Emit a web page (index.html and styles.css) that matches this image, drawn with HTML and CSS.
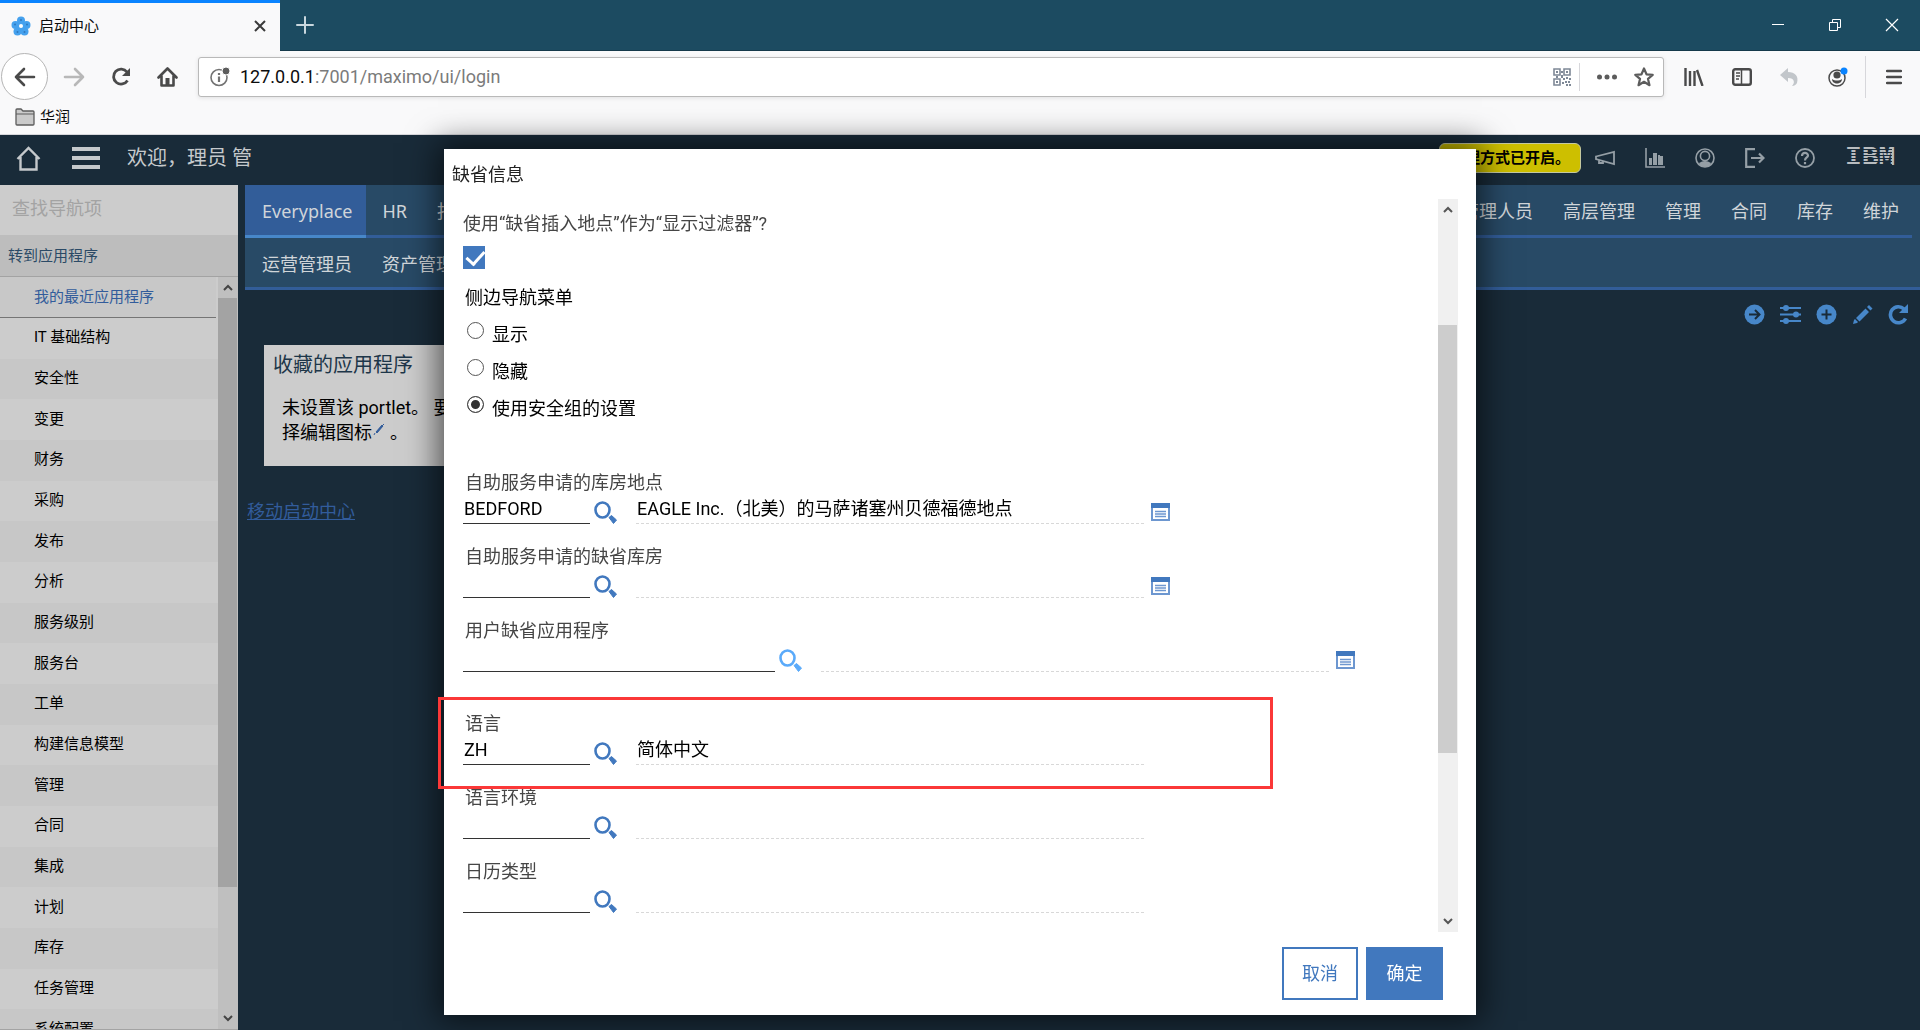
FILE: index.html
```
<!DOCTYPE html>
<html lang="zh-CN">
<head>
    <meta charset="UTF-8">
    <meta name="viewport" content="width=device-width, initial-scale=1.0">
    <title>启动中心</title>
    <link rel="stylesheet" href="styles.css">
</head>
<body>
    <!-- Shared icons -->
    <svg class="icon-defs" width="0" height="0">
        <symbol id="lookup" viewBox="0 0 23 23">
            <ellipse cx="8.500" cy="9" rx="7" ry="7.500" fill="none" stroke="currentColor" stroke-width="2.600"/>
            <path d="M15 16.500l2.500-2 5 4.500-3 3.500z" fill="currentColor" stroke="currentColor" stroke-linejoin="round"/>
        </symbol>
        <symbol id="detail" viewBox="0 0 19 18">
            <rect x="1" y="1" width="17" height="16" fill="#fff" stroke="#6d97d0" stroke-width="2"/>
            <path d="M0 0h19v5H0z" fill="#4178be"/>
            <path d="M4 8.500h11M4 11h11M4 13.500h11" stroke="#6d97d0" stroke-width="1.500"/>
        </symbol>
        <symbol id="up" viewBox="0 0 10 7"><path d="M1 6l4-4 4 4" fill="none" stroke="currentColor" stroke-width="2"/></symbol>
        <symbol id="down" viewBox="0 0 10 7"><path d="M1 1l4 4 4-4" fill="none" stroke="currentColor" stroke-width="2"/></symbol>
    </svg>

    <!-- Browser window -->
    <div class="tab-bar">
        <div class="browser-tab">
            <svg width="20" height="20" viewBox="0 0 20 20">
                <g fill="#45a1ee"><circle cx="10" cy="4.500" r="4"/><circle cx="4.500" cy="9" r="4"/><circle cx="15.500" cy="9" r="4"/><circle cx="6.500" cy="15.500" r="4"/><circle cx="13.500" cy="15.500" r="4"/><circle cx="10" cy="10" r="5"/></g>
                <g fill="#2f78bd"><circle cx="10" cy="4" r="1"/><circle cx="4" cy="8.500" r="1"/><circle cx="16" cy="8.500" r="1"/><circle cx="6.500" cy="16" r="1"/><circle cx="13.500" cy="16" r="1"/></g>
                <circle cx="10" cy="10" r="2" fill="#fff"/>
            </svg>
            <span>启动中心</span>
            <button class="tab-close" aria-label="关闭标签页"><svg width="14" height="14" viewBox="0 0 14 14"><path d="M2 2l10 10M12 2L2 12" stroke="#3a3a3a" stroke-width="2"/></svg></button>
        </div>
        <button class="new-tab" aria-label="新标签页"><svg width="18" height="18" viewBox="0 0 18 18"><path d="M9 1v16M1 9h16" stroke="#c9d7de" stroke-width="2" stroke-linecap="round"/></svg></button>
        <div class="window-buttons">
            <button aria-label="最小化"><svg width="14" height="14" viewBox="0 0 14 14"><path d="M1 6.500h12" stroke="#fff"/></svg></button>
            <button aria-label="还原"><svg width="14" height="14" viewBox="0 0 14 14"><path d="M1.500 4.500h8v8h-8zM4.500 4.500v-3h8v8h-3" fill="none" stroke="#fff"/></svg></button>
            <button aria-label="关闭"><svg width="14" height="14" viewBox="0 0 14 14"><path d="M1 1l12 12M13 1L1 13" stroke="#fff" stroke-width="1.200"/></svg></button>
        </div>
    </div>
    <div class="toolbar">
        <button class="back" aria-label="后退"><svg width="22" height="20" viewBox="0 0 22 20"><path d="M20 10H2M10 2L2 10l8 8" fill="none" stroke="#4a4a4a" stroke-width="2.600" stroke-linecap="round" stroke-linejoin="round"/></svg></button>
        <button aria-label="前进"><svg width="22" height="20" viewBox="0 0 22 20"><path d="M2 10h18M12 2l8 8-8 8" fill="none" stroke="#b8b8b8" stroke-width="2.600" stroke-linecap="round" stroke-linejoin="round"/></svg></button>
        <button aria-label="刷新"><svg width="20" height="20" viewBox="0 0 20 20"><path d="M16.500 13.500A7.500 7.500 0 1 1 16 5" fill="none" stroke="#4a4a4a" stroke-width="2.800"/><path d="M19 1v8h-8z" fill="#4a4a4a"/></svg></button>
        <button aria-label="主页"><svg width="21" height="20" viewBox="0 0 21 20"><path d="M1.500 10.500l9-9 9 9M4.500 9v9.500h12V9" fill="none" stroke="#4a4a4a" stroke-width="2.600" stroke-linecap="round" stroke-linejoin="round"/><path d="M8.500 11h4v8h-4z" fill="#4a4a4a"/></svg></button>
        <div class="url-bar">
            <svg width="20" height="20" viewBox="0 0 20 20"><circle cx="9" cy="10.500" r="8" fill="none" stroke="#737373" stroke-width="1.600"/><path d="M9 9.500v5.500M9 6v2" stroke="#737373" stroke-width="2.200"/><circle cx="16" cy="4" r="4" fill="#5c5c5c" stroke="#fff"/></svg>
            <div class="url"><b>127.0.0.1</b>:7001/maximo/ui/login</div>
            <button class="qr" aria-label="二维码"><svg width="18" height="18" viewBox="0 0 18 18"><path d="M1 1h6v6H1zM11 1h6v6h-6zM1 11h6v6H1z" fill="none" stroke="#7e8896" stroke-width="1.600"/><path d="M3 3h2v2H3zM13 3h2v2h-2zM3 13h2v2H3zM8 3h2v2H8zM8 7h2v3H8zM10 10h2v2h-2zM13 9h2v2h-2zM16 10h2v2h-2zM12 13h2v2h-2zM15 13h2v2h-2zM9 14h2v2H9zM13 16h2v2h-2zM16 16h2v2h-2zM3 8h2v2H3z" fill="#7e8896"/></svg></button>
            <button class="page-actions" aria-label="页面操作"><svg width="20" height="6" viewBox="0 0 20 6"><g fill="#5c5c5c"><circle cx="2.500" cy="3" r="2.500"/><circle cx="10" cy="3" r="2.500"/><circle cx="17.500" cy="3" r="2.500"/></g></svg></button>
            <button aria-label="收藏"><svg width="20" height="20" viewBox="0 0 20 20"><path d="M10 1.500l2.500 5.800 6.200.5-4.700 4.100 1.500 6.300L10 14.800l-5.500 3.400L6 11.900 1.300 7.800l6.200-.5z" fill="none" stroke="#5c5c5c" stroke-width="2.200" stroke-linejoin="round"/></svg></button>
        </div>
        <div class="toolbar-end">
            <button aria-label="书库"><svg width="20" height="18" viewBox="0 0 20 18"><path d="M1.500 0v18M6 3v15M10.500 3v15M13 2l5.500 16" stroke="#4a4a4a" stroke-width="2.400"/></svg></button>
            <button aria-label="侧栏"><svg width="20" height="18" viewBox="0 0 20 18"><rect x="1.200" y="1.200" width="17.600" height="15.600" rx="2" fill="none" stroke="#4a4a4a" stroke-width="2.400"/><path d="M9.500 1v16M4 5h4M4 8h4M4 11h3" stroke="#4a4a4a" stroke-width="1.500"/></svg></button>
            <button aria-label="撤销"><svg width="20" height="18" viewBox="0 0 20 18"><path d="M8 0v4c7 0 11 4 9 11-1 2-3 3-5 3 3-3 3-8-4-8v4L0 7z" fill="#c2c6ca"/></svg></button>
            <button aria-label="帐户"><svg width="20" height="20" viewBox="0 0 20 20"><circle cx="9" cy="11" r="8" fill="none" stroke="#4a4a4a" stroke-width="1.500"/><circle cx="9" cy="8" r="3.600" fill="#4a4a4a"/><path d="M4 12c3 2 7 2 10 0 0 6-10 6-10 0z" fill="#4a4a4a"/><circle cx="16" cy="4" r="3.500" fill="#0a84ff"/></svg></button>
            <button class="app-menu" aria-label="打开菜单"><svg width="16" height="16" viewBox="0 0 16 16"><path d="M1 2h14M1 8h14M1 14h14" stroke="#4a4a4a" stroke-width="2.400" stroke-linecap="round"/></svg></button>
        </div>
    </div>
    <div class="bookmarks">
        <svg width="20" height="18" viewBox="0 0 20 18"><path d="M1 16V2q0-1 1-1h4l2 2h10q1 0 1 1v12q0 1-1 1H2q-1 0-1-1z" fill="#cacaca" stroke="#5c5c5c" stroke-width="1.300"/><path d="M1 6h18" stroke="#5c5c5c"/></svg>
        <a href="#">华润</a>
    </div>

    <!-- Application -->
    <header>
        <a href="#" aria-label="启动中心"><svg width="25" height="25" viewBox="0 0 25 25"><path d="M1.500 13L12.500 2l11 11M4.500 11v12.500h16V11" fill="none" stroke="#c5c9cc" stroke-width="2.400"/></svg></a>
        <button class="menu-button" aria-label="菜单"><svg width="28" height="22" viewBox="0 0 28 22"><path d="M0 2h28M0 11h28M0 20h28" stroke="#c5c9cc" stroke-width="4"/></svg></button>
        <span class="welcome">欢迎，理员 管</span>
        <div class="header-tools">
            <span class="admin-mode">管理方式已开启。</span>
            <button aria-label="公告"><svg width="20" height="20" viewBox="0 0 20 20"><path d="M1 8.500L19 4v12L1 11zM4 12v3h4v-2" fill="none" stroke="currentColor" stroke-width="1.800"/></svg></button>
            <button aria-label="报告"><svg width="20" height="20" viewBox="0 0 20 20"><path d="M1 0v19h19" fill="none" stroke="currentColor" stroke-width="1.600"/><path d="M4 10h3v7H4zM8 5h4v12H8zM13 7h2v10h-2zM15 8h3v9h-3z" fill="currentColor"/></svg></button>
            <button aria-label="个人资料"><svg width="20" height="20" viewBox="0 0 20 20"><circle cx="10" cy="10" r="9" fill="none" stroke="currentColor" stroke-width="1.600"/><circle cx="10" cy="8" r="4.600" fill="none" stroke="currentColor" stroke-width="1.600"/><path d="M4 15q6-4 12 0-1 4-6 4t-6-4z" fill="currentColor"/></svg></button>
            <button aria-label="注销"><svg width="20" height="20" viewBox="0 0 20 20"><path d="M10 1.200H1.200v17.600H10M6 10h12M14 5.500l4.500 4.500-4.500 4.500" fill="none" stroke="currentColor" stroke-width="2.200"/></svg></button>
            <button aria-label="帮助"><svg width="20" height="20" viewBox="0 0 20 20"><circle cx="10" cy="10" r="9" fill="none" stroke="currentColor" stroke-width="1.800"/><path d="M7 8c0-4 6-4 6-.500 0 2-3 2-3 5M10 14v2.200" fill="none" stroke="currentColor" stroke-width="2.200"/></svg></button>
            <span class="ibm">IBM</span>
        </div>
    </header>
    <div class="app">
        <aside class="sidebar">
            <input class="nav-search" type="text" placeholder="查找导航项" aria-label="查找导航项">
            <h2>转到应用程序</h2>
            <div class="side-scroll">
                <div class="side-list">
                    <a class="recent" href="#">我的最近应用程序</a>
                    <nav class="modules">
                        <a href="#">IT 基础结构</a>
                        <a href="#">安全性</a>
                        <a href="#">变更</a>
                        <a href="#">财务</a>
                        <a href="#">采购</a>
                        <a href="#">发布</a>
                        <a href="#">分析</a>
                        <a href="#">服务级别</a>
                        <a href="#">服务台</a>
                        <a href="#">工单</a>
                        <a href="#">构建信息模型</a>
                        <a href="#">管理</a>
                        <a href="#">合同</a>
                        <a href="#">集成</a>
                        <a href="#">计划</a>
                        <a href="#">库存</a>
                        <a href="#">任务管理</a>
                        <a href="#">系统配置</a>
                    </nav>
                </div>
                <div class="scrollbar side-bar">
                    <svg width="10" height="7"><use href="#up"/></svg>
                    <div class="track"><div class="thumb"></div></div>
                    <svg width="10" height="7"><use href="#down"/></svg>
                </div>
            </div>
        </aside>
        <main>
            <nav class="center-tabs">
                <div class="tab-row first">
                    <a class="active" href="#">Everyplace</a>
                    <a href="#">HR</a>
                    <a href="#">报告</a>
                    <a class="push" href="#">管理人员</a>
                    <a href="#">高层管理</a>
                    <a href="#">管理</a>
                    <a href="#">合同</a>
                    <a href="#">库存</a>
                    <a href="#">维护</a>
                </div>
                <div class="tab-row">
                    <a href="#">运营管理员</a>
                    <a href="#">资产管理</a>
                </div>
            </nav>
            <div class="center-tools">
                <button aria-label="转至"><svg width="21" height="21" viewBox="0 0 21 21"><circle cx="10.500" cy="10.500" r="10" fill="currentColor"/><path d="M5 10.500h10M11 6l4.500 4.500L11 15" fill="none" stroke="#192b39" stroke-width="2"/></svg></button>
                <button aria-label="显示设置"><svg width="21" height="21" viewBox="0 0 21 21"><path d="M0 4h21M0 10.500h21M0 17h21" stroke="currentColor" stroke-width="2"/><g fill="currentColor"><circle cx="6" cy="4" r="3"/><circle cx="16" cy="10.500" r="3"/><circle cx="6" cy="17" r="3"/></g></svg></button>
                <button aria-label="新建"><svg width="21" height="21" viewBox="0 0 21 21"><circle cx="10.500" cy="10.500" r="10" fill="currentColor"/><path d="M10.500 5.500v10M5.500 10.500h10" stroke="#192b39" stroke-width="2"/></svg></button>
                <button aria-label="编辑"><svg width="21" height="21" viewBox="0 0 21 21"><path d="M1 20l1-4 1-1 3 3-1 1zM4 14L13.500 4.500l3.500 3.500L7.500 17.500zM15 3l2-2 3.500 3.500-2 2z" fill="currentColor"/></svg></button>
                <button aria-label="刷新"><svg width="21" height="21" viewBox="0 0 21 21"><path d="M17.500 14.500A8 8 0 1 1 16 5" fill="none" stroke="currentColor" stroke-width="3.600"/><path d="M20 0v9h-9z" fill="currentColor"/></svg></button>
            </div>
            <section class="portlet">
                <h3>收藏的应用程序</h3>
                <p>未设置该 portlet。 要设置该 portlet，请选<br>择编辑图标<svg width="14" height="14" viewBox="0 0 14 14"><path d="M4 10l6-7 1 1-6 7zM11 2l1 1M3 11l-1 2" fill="#325c9b" stroke="#325c9b"/></svg>。</p>
            </section>
            <a class="mobile-link" href="#">移动启动中心</a>
        </main>
    </div>

    <!-- Default information dialog -->
    <div class="dialog" role="dialog" aria-labelledby="dialog-title">
        <h1 id="dialog-title">缺省信息</h1>
        <div class="dialog-body">
            <form class="settings" id="settings">
                <label class="question" for="insert-site">使用“缺省插入地点”作为“显示过滤器”?</label>
                <input class="checkbox" type="checkbox" id="insert-site" checked>
                <fieldset>
                    <legend>侧边导航菜单</legend>
                    <label><input type="radio" name="side-nav">显示</label>
                    <label><input type="radio" name="side-nav">隐藏</label>
                    <label><input type="radio" name="side-nav" checked>使用安全组的设置</label>
                </fieldset>
                <div class="field">
                    <label for="store-site">自助服务申请的库房地点</label>
                    <div class="field-row">
                        <input class="value" id="store-site" type="text" value="BEDFORD">
                        <button type="button" aria-label="选择值"><svg width="23" height="23"><use href="#lookup"/></svg></button>
                        <input class="description" type="text" value="EAGLE Inc.（北美）的马萨诸塞州贝德福德地点" aria-label="地点描述" readonly>
                        <button type="button" aria-label="详细描述"><svg width="19" height="18"><use href="#detail"/></svg></button>
                    </div>
                </div>
                <div class="field">
                    <label for="storeroom">自助服务申请的缺省库房</label>
                    <div class="field-row">
                        <input class="value" id="storeroom" type="text">
                        <button type="button" aria-label="选择值"><svg width="23" height="23"><use href="#lookup"/></svg></button>
                        <input class="description" type="text" aria-label="库房描述" readonly>
                        <button type="button" aria-label="详细描述"><svg width="19" height="18"><use href="#detail"/></svg></button>
                    </div>
                </div>
                <div class="field">
                    <label for="default-app">用户缺省应用程序</label>
                    <div class="field-row">
                        <input class="value wide" id="default-app" type="text">
                        <button class="light" type="button" aria-label="选择值"><svg width="23" height="23"><use href="#lookup"/></svg></button>
                        <input class="description" type="text" aria-label="应用程序描述" readonly>
                        <button type="button" aria-label="详细描述"><svg width="19" height="18"><use href="#detail"/></svg></button>
                    </div>
                </div>
                <div class="field group-start">
                    <label for="language">语言</label>
                    <div class="field-row">
                        <input class="value" id="language" type="text" value="ZH">
                        <button type="button" aria-label="选择值"><svg width="23" height="23"><use href="#lookup"/></svg></button>
                        <input class="description" type="text" value="简体中文" aria-label="语言描述" readonly>
                    </div>
                </div>
                <div class="field">
                    <label for="locale">语言环境</label>
                    <div class="field-row">
                        <input class="value" id="locale" type="text">
                        <button type="button" aria-label="选择值"><svg width="23" height="23"><use href="#lookup"/></svg></button>
                        <input class="description" type="text" aria-label="语言环境描述" readonly>
                    </div>
                </div>
                <div class="field">
                    <label for="calendar">日历类型</label>
                    <div class="field-row">
                        <input class="value" id="calendar" type="text">
                        <button type="button" aria-label="选择值"><svg width="23" height="23"><use href="#lookup"/></svg></button>
                        <input class="description" type="text" aria-label="日历类型描述" readonly>
                    </div>
                </div>
            </form>
            <div class="scrollbar">
                <svg width="10" height="7"><use href="#up"/></svg>
                <div class="track"><div class="thumb"></div></div>
                <svg width="10" height="7"><use href="#down"/></svg>
            </div>
        </div>
        <div class="dialog-buttons">
            <button type="button">取消</button>
            <button class="primary" type="submit" form="settings">确定</button>
        </div>
        <div class="marker"></div>
    </div>
</body>
</html>
```
FILE: styles.css
```
* {
    box-sizing: border-box;
}
body {
    margin: 0;
    height: 100vh;
    display: flex;
    flex-direction: column;
    overflow: hidden;
    background-color: #192b39;
    font-family: Roboto, "Noto Sans CJK SC", sans-serif;
    font-size: 18px;
    line-height: 24px;
}
button, input {
    font: inherit;
    color: inherit;
    border: none;
    background: none;
    padding: 0;
    margin: 0;
}
button {
    display: flex;
    align-items: center;
    justify-content: center;
    cursor: pointer;
}
a {
    color: inherit;
    text-decoration: none;
}
svg {
    display: block;
    flex-shrink: 0;
}
.icon-defs {
    position: absolute;
}

/* Browser window */
.tab-bar {
    display: flex;
    align-items: stretch;
    height: 51px;
    flex-shrink: 0;
    background-color: #1c4b61;
    border-bottom: 1px solid #15394a;
    font-size: 15px;
}
.browser-tab {
    display: flex;
    align-items: center;
    gap: 8px;
    width: 280px;
    margin-bottom: -1px;
    padding: 0 13px 2px 11px;
    border-top: 3px solid #0a84ff;
    background-color: #f9f9fa;
    color: #0c0c0d;
}
.tab-close {
    margin-left: auto;
}
.new-tab {
    width: 50px;
}
.window-buttons {
    display: flex;
    margin-left: auto;
}
.window-buttons button {
    width: 57px;
}
.toolbar {
    display: flex;
    align-items: center;
    height: 51px;
    flex-shrink: 0;
    background-color: #f9f9fa;
}
.toolbar > button {
    width: 47px;
    height: 47px;
}
.toolbar .back {
    margin: 0 2px 0 1px;
    border: 1px solid #b5b5b5;
    border-radius: 50%;
    background-color: #fff;
}
.url-bar {
    display: flex;
    align-items: center;
    flex: 1;
    height: 40px;
    margin-left: 7px;
    padding: 0 9px 0 11px;
    border: 1px solid #b9b9b9;
    border-radius: 3px;
    background-color: #fff;
    box-shadow: 0 1px 4px rgba(0, 0, 0, 0.1);
}
.url {
    flex: 1;
    margin-left: 10px;
    color: #7b7b7b;
}
.url b {
    font-weight: normal;
    color: #0c0c0d;
}
.url-bar .qr {
    height: 28px;
    padding-right: 8px;
    border-right: 1px solid #d7d7db;
}
.url-bar .page-actions {
    margin: 0 17px;
}
.toolbar-end {
    display: flex;
    align-items: center;
    gap: 28px;
    padding: 0 18px 0 20px;
}
.toolbar-end .app-menu {
    height: 42px;
    padding-left: 20px;
    margin-left: -11px;
    border-left: 1px solid #d7d7db;
}
.bookmarks {
    display: flex;
    align-items: center;
    gap: 5px;
    height: 33px;
    flex-shrink: 0;
    padding: 0 15px 3px;
    border-bottom: 1px solid #d7d7db;
    background-color: #f9f9fa;
    font-size: 15px;
    color: #0c0c0d;
}

/* Application header */
header {
    display: flex;
    align-items: center;
    height: 50px;
    flex-shrink: 0;
    padding: 0 28px 4px 16px;
    color: #959fa6;
}
.menu-button {
    margin-left: 31px;
}
.welcome {
    margin-left: 27px;
    font-size: 20px;
    color: #c5c9cc;
}
.header-tools {
    display: flex;
    align-items: center;
    gap: 30px;
    margin-left: auto;
}
.admin-mode {
    margin-right: -16px;
    padding: 2px 10px;
    border: 1px solid #c5c9a0;
    border-radius: 6px;
    background-color: #cdbf00;
    color: #000;
    font-size: 15px;
    font-weight: bold;
}
.ibm {
    position: relative;
    width: 47px;
    color: #b8bcbf;
    font-family: "Liberation Mono", monospace;
    font-size: 28px;
    font-weight: bold;
}
/* stripes of the logo */
.ibm::after {
    content: "";
    position: absolute;
    inset: 0;
    background: repeating-linear-gradient(#192b39 0 1px, transparent 1px 3px);
}

/* Sidebar */
.app {
    display: flex;
    gap: 7px;
    flex: 1;
    min-height: 0;
}
.sidebar {
    display: flex;
    flex-direction: column;
    width: 238px;
    background-color: #ccc;
    border-bottom: 1px solid #a3a3a3;
}
.nav-search {
    width: 100%;
    height: 50px;
    padding: 0 12px 4px;
    flex-shrink: 0;
}
.nav-search::placeholder {
    color: #a3a3a3;
}
.sidebar h2 {
    margin: 0;
    padding: 9px 8px 8px;
    border-bottom: 1px solid #a3a3a3;
    background-color: #bdbdbd;
    color: #2b4a66;
    font-size: 15px;
    font-weight: normal;
}
.side-scroll {
    display: flex;
    flex: 1;
    min-height: 0;
    font-size: 15px;
}
.side-list {
    flex: 1;
    overflow: hidden;
}
.side-list a {
    display: flex;
    align-items: center;
    padding: 0 0 2px 34px;
}
.side-list .recent {
    height: 41px;
    margin-right: 2px;
    padding-bottom: 0;
    border-bottom: 1px solid #757575;
    background-color: #c8c8c8;
    color: #325c9b;
}
.modules {
    display: grid;
    grid-auto-rows: 1fr;
    height: 732px;
}
.modules a:nth-child(even) {
    background-color: #c7c7c7;
}
.scrollbar {
    display: flex;
    flex-direction: column;
    align-items: center;
    width: 20px;
    padding: 7px 0;
    background-color: #f0f0f0;
    color: #555;
}
.track {
    flex: 1;
    align-self: stretch;
    padding-right: 1px;
    margin: 7px 0;
}
.thumb {
    height: 62%;
    margin-top: 105px;
    background-color: #cdcdcd;
}
.side-bar {
    background-color: #bfbfbf;
    color: #444;
}
.side-bar .thumb {
    height: 83%;
    margin-top: 0;
    background-color: #a3a3a3;
}

/* Start center */
main {
    flex: 1;
    min-width: 0;
}
.center-tabs {
    background-color: #284a66;
    border-bottom: 3px solid #325d99;
    color: #d0d5d9;
    font-family: "Noto Sans", "Noto Sans CJK SC", sans-serif;
}
.tab-row {
    display: flex;
    height: 49px;
}
.tab-row.first {
    height: 53px;
    margin-right: 8px;
    border-bottom: 3px solid #325d99;
}
.tab-row a {
    display: flex;
    align-items: center;
    padding: 2px 13px 0 17px;
    white-space: nowrap;
}
.tab-row .push {
    margin-left: auto;
}
.tab-row .active {
    margin-bottom: -3px;
    border-bottom: 3px solid #4787c9;
    background-color: #325d99;
}
.center-tools {
    display: flex;
    justify-content: flex-end;
    gap: 15px;
    padding: 14px 11px 20px;
    color: #4787c9;
}
.portlet {
    width: 50%;
    margin-left: 19px;
    padding: 8px 9px 21px;
    background-color: #ccc;
}
.portlet h3 {
    margin: 0 0 18px;
    font-size: 20px;
    font-weight: normal;
    color: #1d3649;
}
.portlet p {
    margin: 0 9px;
    line-height: 25px;
}
.portlet p svg {
    display: inline-block;
    margin-right: 4px;
    vertical-align: 3px;
}
.mobile-link {
    display: inline-block;
    margin: 34px 2px;
    color: #325c9b;
    text-decoration: underline;
}

/* Dialog */
.dialog {
    position: fixed;
    top: 149px;
    bottom: 15px;
    left: 50%;
    transform: translateX(-50%);
    display: flex;
    flex-direction: column;
    width: 1032px;
    background-color: #fff;
    box-shadow: 0 0 30px 6px rgba(0, 0, 0, 0.6);
}
.dialog h1 {
    margin: 0;
    padding: 14px 8px 12px;
    font-size: 18px;
    font-weight: normal;
    color: #222;
}
.dialog-body {
    display: flex;
    flex: 1;
    min-height: 0;
    padding-right: 18px;
}
.settings {
    flex: 1;
    overflow: hidden;
    padding: 13px 0 0 19px;
}
.question, .field label {
    display: block;
    color: #464646;
}
.checkbox {
    display: block;
    appearance: none;
    width: 22px;
    height: 23px;
    margin: 10px 0 17px;
    background-color: #4178be;
}
.checkbox:checked::after {
    content: "";
    display: block;
    width: 8px;
    height: 15px;
    margin: 1px 0 0 7px;
    border: solid #fff;
    border-width: 0 3px 3px 0;
    transform: rotate(42deg);
}
fieldset {
    margin: 0 0 44px;
    padding: 0 2px;
    border: none;
}
legend {
    padding: 0;
    margin-bottom: 6px;
}
fieldset label {
    display: flex;
    align-items: center;
    gap: 8px;
    height: 37px;
}
fieldset input {
    appearance: none;
    width: 17px;
    height: 17px;
    margin: 0 0 8px 2px;
    border: 1px solid #555;
    border-radius: 50%;
}
fieldset input:checked {
    background-color: #333;
    border-color: #444;
    box-shadow: inset 0 0 0 3px #fff;
}
.field {
    margin-bottom: 21px;
}
.group-start {
    margin-top: 40px;
}
.field label {
    padding-left: 2px;
}
.field-row {
    display: flex;
    align-items: flex-end;
    height: 29px;
}
.field-row input {
    height: 29px;
    color: #000;
}
.value {
    width: 127px;
    margin-right: 4px;
    padding: 0 0 1px 1px;
    border-bottom: 1px solid #333;
}
.value.wide {
    width: 312px;
}
.description {
    width: 508px;
    margin: 0 7px 0 19px;
    padding: 0 0 4px 1px;
    border-bottom: 1px dashed #d8d8d8;
}
.field-row button {
    color: #4178be;
}
.field-row .light {
    color: #5aaafa;
}
.field-row .description + button {
    padding-bottom: 3px;
}
.dialog-buttons {
    display: flex;
    justify-content: flex-end;
    gap: 8px;
    padding: 15px 33px 15px;
}
.dialog-buttons button {
    width: 76px;
    height: 53px;
    border: 2px solid #4178be;
    color: #4178be;
}
.dialog-buttons .primary {
    width: 77px;
    background-color: #4178be;
    color: #fff;
}
/* frame around the language field */
.marker {
    position: absolute;
    top: 548px;
    left: -6px;
    width: 835px;
    height: 92px;
    border: 3px solid #fb3838;
    pointer-events: none;
}
```
